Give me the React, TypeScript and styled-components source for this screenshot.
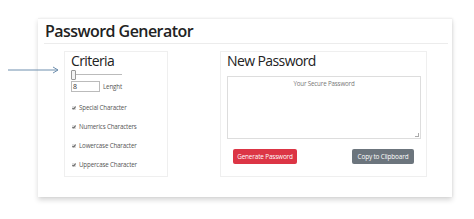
import React from 'react'
import styled, { createGlobalStyle } from 'styled-components'

const criteria = [
  'Special Character',
  'Numerics Characters',
  'Lowercase Character',
  'Uppercase Character',
]

const App = () => {
  return (
    <Page>
      <GlobalStyle />
      <Arrow width="52" height="8" viewBox="0 0 52 8">
        <line x1="0" y1="4" x2="50" y2="4" stroke="#6f8fae" strokeWidth="1" />
        <path d="M45 1 L50 4 L45 7" fill="none" stroke="#6f8fae" strokeWidth="1" />
      </Arrow>

      <Card>
        <CardHeader>
          <h1>Password Generator</h1>
        </CardHeader>

        <CardBody>
          <CriteriaBox>
            <h2>Criteria</h2>
            <Slider>
              <Thumb />
            </Slider>
            <LengthRow>
              <NumberInput>8</NumberInput>
              <span>Lenght</span>
            </LengthRow>
            <CheckList>
              {criteria.map((label) => (
                <CheckRow key={label}>
                  <CheckBox>
                    <svg width="4" height="4" viewBox="0 0 4 4">
                      <path d="M0.5 2 L1.6 3.2 L3.6 0.6" fill="none" stroke="#333" strokeWidth="0.9" />
                    </svg>
                  </CheckBox>
                  {label}
                </CheckRow>
              ))}
            </CheckList>
          </CriteriaBox>

          <PasswordBox>
            <h2>New Password</h2>
            <TextArea>
              <span>Your Secure Password</span>
              <Grip />
            </TextArea>
            <ButtonRow>
              <Button $variant="danger">Generate Password</Button>
              <Button $variant="secondary">Copy to Clipboard</Button>
            </ButtonRow>
          </PasswordBox>
        </CardBody>
      </Card>
    </Page>
  )
}

export default App

// Styled Components

const GlobalStyle = createGlobalStyle`
  html, body {
    margin: 0;
    padding: 0;
    background: #ffffff;
  }

  body {
    font-family: 'Open Sans', 'Noto Sans', sans-serif;
    color: #212529;
  }
`

const Page = styled.div`
  position: relative;
  width: 474px;
  height: 219px;
  padding: 18px 0 0 38px;
  box-sizing: border-box;
`

const Arrow = styled.svg`
  position: absolute;
  left: 8px;
  top: 66px;
`

const Card = styled.div`
  width: 414px;
  height: 179px;
  background: #fff;
  border-top: 1px solid #f0f0f0;
  box-shadow: 0 3px 5px rgba(0, 0, 0, 0.16), 1px 0 2px rgba(0, 0, 0, 0.05);
  box-sizing: border-box;
`

const CardHeader = styled.div`
  margin: 0 4px 0 6px;
  padding: 2px 0 0 1px;
  height: 25px;
  box-sizing: border-box;
  border-bottom: 1px solid #ececec;

  h1 {
    margin: 0;
    font-size: 16px;
    font-weight: 600;
    letter-spacing: -0.55px;
    line-height: 20px;
    color: #222;
  }
`

const CardBody = styled.div`
  display: grid;
  grid-template-columns: 104px 207px;
  column-gap: 52px;
  padding: 7px 0 0 26px;
`

const Panel = styled.div`
  height: 126px;
  border: 1px solid #efefef;
  box-sizing: border-box;
  padding: 0 6px;

  h2 {
    margin: 0;
    font-size: 14px;
    font-weight: 500;
    letter-spacing: -0.6px;
    line-height: 17px;
    color: #222;
  }
`

const CriteriaBox = styled(Panel)`
  display: flex;
  flex-direction: column;
`

const Slider = styled.div`
  position: relative;
  width: 51px;
  height: 1px;
  background: #bbb;
  margin: 5px 0 6px;
`

const Thumb = styled.div`
  position: absolute;
  left: 0;
  top: -4px;
  width: 3px;
  height: 8px;
  border: 1px solid #999;
  border-radius: 1px;
  background: #f4f4f4;
`

const LengthRow = styled.div`
  display: flex;
  align-items: center;
  gap: 3px;
  font-size: 6.2px;
  letter-spacing: -0.15px;
  color: #555;
`

const NumberInput = styled.div`
  width: 29px;
  height: 11px;
  border: 1px solid #bbb;
  box-sizing: border-box;
  padding-left: 1px;
  font-size: 7px;
  line-height: 9px;
  color: #333;
`

const CheckList = styled.div`
  display: flex;
  flex-direction: column;
  gap: 12px;
  margin-top: 12px;
`

const CheckRow = styled.div`
  display: flex;
  align-items: center;
  gap: 3px;
  height: 7px;
  padding-left: 1px;
  font-size: 6.2px;
  letter-spacing: -0.15px;
  color: #555;
  white-space: nowrap;
`

const CheckBox = styled.span`
  display: inline-flex;
  width: 4px;
  height: 4px;
  background: #ddd;
`

const PasswordBox = styled(Panel)`
  display: flex;
  flex-direction: column;
`

const TextArea = styled.div`
  position: relative;
  width: 194px;
  height: 63px;
  margin-top: 7px;
  border: 1px solid #ddd;
  box-sizing: border-box;
  text-align: center;
  font-size: 6.2px;
  letter-spacing: -0.15px;
  color: #777;
  padding-top: 2px;
`

const Grip = styled.span`
  position: absolute;
  right: 1px;
  bottom: 1px;
  width: 3px;
  height: 3px;
  border-right: 1px solid #aaa;
  border-bottom: 1px solid #aaa;
`

const ButtonRow = styled.div`
  display: flex;
  justify-content: space-between;
  padding: 0 6px 0 6px;
  margin-top: 10px;
`

const Button = styled.button<{ $variant: 'danger' | 'secondary' }>`
  height: 15px;
  padding: 0;
  border: none;
  border-radius: 2px;
  font-family: inherit;
  font-size: 6.4px;
  letter-spacing: -0.15px;
  white-space: nowrap;
  color: #fff;
  background: ${(p) => (p.$variant === 'danger' ? '#dc3545' : '#6c757d')};
  width: ${(p) => (p.$variant === 'danger' ? '64px' : '62px')};
`
